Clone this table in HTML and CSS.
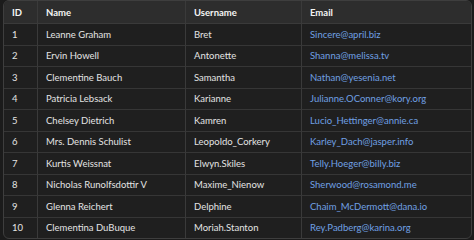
FILE: index.html
```html
<!DOCTYPE html>
<html>
<head>
<meta charset="utf-8">
<link rel="stylesheet" href="styles.css">
</head>
<body>
<div class="wrap">
<table class="users">
<colgroup><col class="c-id"><col class="c-name"><col class="c-user"><col class="c-email"></colgroup>
<thead>
<tr><th>ID</th><th>Name</th><th>Username</th><th>Email</th></tr>
</thead>
<tbody>
<tr><td>1</td><td>Leanne Graham</td><td>Bret</td><td class="mail">Sincere@april.biz</td></tr>
<tr><td>2</td><td>Ervin Howell</td><td>Antonette</td><td class="mail">Shanna@melissa.tv</td></tr>
<tr><td>3</td><td>Clementine Bauch</td><td>Samantha</td><td class="mail">Nathan@yesenia.net</td></tr>
<tr><td>4</td><td>Patricia Lebsack</td><td>Karianne</td><td class="mail">Julianne.OConner@kory.org</td></tr>
<tr><td>5</td><td>Chelsey Dietrich</td><td>Kamren</td><td class="mail">Lucio_Hettinger@annie.ca</td></tr>
<tr><td>6</td><td>Mrs. Dennis Schulist</td><td>Leopoldo_Corkery</td><td class="mail">Karley_Dach@jasper.info</td></tr>
<tr><td>7</td><td>Kurtis Weissnat</td><td>Elwyn.Skiles</td><td class="mail">Telly.Hoeger@billy.biz</td></tr>
<tr><td>8</td><td>Nicholas Runolfsdottir V</td><td>Maxime_Nienow</td><td class="mail">Sherwood@rosamond.me</td></tr>
<tr><td>9</td><td>Glenna Reichert</td><td>Delphine</td><td class="mail">Chaim_McDermott@dana.io</td></tr>
<tr><td>10</td><td>Clementina DuBuque</td><td>Moriah.Stanton</td><td class="mail">Rey.Padberg@karina.org</td></tr>
</tbody>
</table>
</div>
</body>
</html>
```
FILE: styles.css
```css
html, body {
  margin: 0;
  padding: 0;
  background: #1b1b1b;
}
body {
  font-family: Lato, "Open Sans", sans-serif;
  font-size: 9.5px;
  color: #e4e4e4;
}
.wrap {
  margin: 0 3px 0 3px;
  width: 467px;
  border: 1px solid #3e3e3e;
  border-radius: 6px;
  overflow: hidden;
  background: #1f1f1f;
}
.users {
  width: 100%;
  border-collapse: separate;
  border-spacing: 0;
  table-layout: fixed;
}
.c-id { width: 34px; }
.c-name { width: 148px; }
.c-user { width: 116px; }
.c-email { width: auto; }
th, td {
  text-align: left;
  padding: 0 0 0 8px;
  white-space: nowrap;
  overflow: hidden;
  border-right: 1px solid #3a3a3a;
}
th:last-child, td:last-child { border-right: none; }
th {
  height: 22px;
  background: #2d2d2d;
  color: #f4f4f4;
  font-weight: 700;
  border-bottom: 1px solid #3a3a3a;
}
td {
  height: 20.5px;
  border-top: 1px solid #363636;
}
tbody tr:first-child td { border-top: none; }
.mail { color: #70a0e4; }
```
